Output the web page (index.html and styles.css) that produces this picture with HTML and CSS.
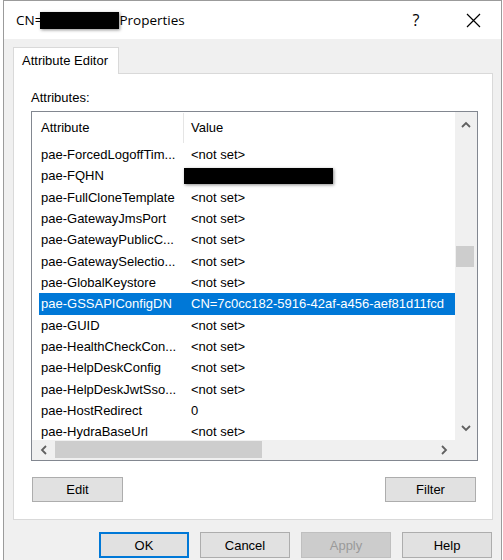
FILE: index.html
```html
<!DOCTYPE html>
<html lang="en">
  <head>
    <meta charset="UTF-8" />
    <title>Properties</title>
    <link rel="stylesheet" href="styles.css">
  </head>
  <body>
    <div class="window">
      <div class="titlebar">
        <div class="title">CN=<span class="redact title-redact"></span>Properties</div>
        <div class="tb-btn tb-help">?</div>
        <div class="tb-btn tb-close">
          <svg width="15" height="15" viewBox="0 0 15 15">
            <path d="M1 1 L14 14 M14 1 L1 14" stroke="#000" stroke-width="1.2" fill="none" />
          </svg>
        </div>
      </div>

      <div class="frame">
        <div class="tab">Attribute Editor</div>
        <div class="panel">
          <div class="label">Attributes:</div>
          <div class="listview">
            <div class="lv-content">
              <div class="lv-header">
                <div class="hd-cell hd-attr">Attribute</div>
                <div class="hd-cell hd-value">Value</div>
              </div>
              <div class="lv-body">
                <div class="row"><span class="c-attr">pae-ForcedLogoffTim...</span><span class="c-val">&lt;not set&gt;</span></div>
                <div class="row"><span class="c-attr">pae-FQHN</span><span class="c-val"><span class="redact val-redact"></span></span></div>
                <div class="row"><span class="c-attr">pae-FullCloneTemplate</span><span class="c-val">&lt;not set&gt;</span></div>
                <div class="row"><span class="c-attr">pae-GatewayJmsPort</span><span class="c-val">&lt;not set&gt;</span></div>
                <div class="row"><span class="c-attr">pae-GatewayPublicC...</span><span class="c-val">&lt;not set&gt;</span></div>
                <div class="row"><span class="c-attr">pae-GatewaySelectio...</span><span class="c-val">&lt;not set&gt;</span></div>
                <div class="row"><span class="c-attr">pae-GlobalKeystore</span><span class="c-val">&lt;not set&gt;</span></div>
                <div class="row selected"><span class="c-attr">pae-GSSAPIConfigDN</span><span class="c-val">CN=7c0cc182-5916-42af-a456-aef81d11fcd</span></div>
                <div class="row"><span class="c-attr">pae-GUID</span><span class="c-val">&lt;not set&gt;</span></div>
                <div class="row"><span class="c-attr">pae-HealthCheckCon...</span><span class="c-val">&lt;not set&gt;</span></div>
                <div class="row"><span class="c-attr">pae-HelpDeskConfig</span><span class="c-val">&lt;not set&gt;</span></div>
                <div class="row"><span class="c-attr">pae-HelpDeskJwtSso...</span><span class="c-val">&lt;not set&gt;</span></div>
                <div class="row"><span class="c-attr">pae-HostRedirect</span><span class="c-val">0</span></div>
                <div class="row"><span class="c-attr">pae-HydraBaseUrl</span><span class="c-val">&lt;not set&gt;</span></div>
              </div>
            </div>

            <div class="vscroll">
              <div class="sb-btn">
                <svg width="10" height="7" viewBox="0 0 10 7"><path d="M1 6 L5 2 L9 6" stroke="#606060" stroke-width="1.8" fill="none" /></svg>
              </div>
              <div class="sb-track"><div class="v-thumb"></div></div>
              <div class="sb-btn">
                <svg width="10" height="7" viewBox="0 0 10 7"><path d="M1 1 L5 5 L9 1" stroke="#606060" stroke-width="1.8" fill="none" /></svg>
              </div>
            </div>

            <div class="hscroll">
              <div class="sb-btn h">
                <svg width="7" height="10" viewBox="0 0 7 10"><path d="M6 1 L2 5 L6 9" stroke="#606060" stroke-width="1.8" fill="none" /></svg>
              </div>
              <div class="sb-track h"><div class="h-thumb"></div></div>
              <div class="sb-btn h">
                <svg width="7" height="10" viewBox="0 0 7 10"><path d="M1 1 L5 5 L1 9" stroke="#606060" stroke-width="1.8" fill="none" /></svg>
              </div>
            </div>

            <div class="corner"></div>
          </div>

          <div class="panel-buttons">
            <button class="btn btn-edit">Edit</button>
            <button class="btn btn-filter">Filter</button>
          </div>
        </div>

        <div class="footer">
          <button class="btn btn-default">OK</button>
          <button class="btn">Cancel</button>
          <button class="btn" disabled>Apply</button>
          <button class="btn">Help</button>
        </div>
      </div>
    </div>
  </body>
</html>
```

FILE: styles.css
```css
html,
body {
  margin: 0;
  padding: 0;
}

body {
  width: 503px;
  height: 560px;
  overflow: hidden;
  background: #fff;
  font-family: "Liberation Sans", Arial, sans-serif;
  font-size: 13px;
  color: #000;
}

.window {
  margin-left: 3px;
  width: 497px;
  height: 559px;
  border: 1px solid #9b9b9b;
  border-bottom: none;
  display: flex;
  flex-direction: column;
  overflow: hidden;
}

/* title bar */
.titlebar {
  height: 38px;
  flex-shrink: 0;
  display: flex;
  align-items: center;
  background: #fff;
}

.title {
  flex: 1;
  padding-left: 12px;
  font-family: "Open Sans", "Liberation Sans", sans-serif;
  font-size: 13.5px;
  display: flex;
  align-items: center;
  white-space: nowrap;
}

.redact {
  display: inline-block;
  background: #000;
  box-shadow: 1px 1px 3px rgba(0, 0, 0, 0.45);
}

.title-redact {
  width: 79px;
  height: 17px;
  margin-left: -2px;
}

.tb-btn {
  height: 38px;
  display: flex;
  align-items: center;
  justify-content: center;
}

.tb-help {
  width: 58px;
  font-family: "Open Sans", sans-serif;
  font-size: 16px;
}

.tb-close {
  width: 56px;
}

/* dialog body */
.frame {
  flex: 1;
  background: #f0f0f0;
  padding: 8px 8px 0 9px;
  overflow: hidden;
}

.tab {
  position: relative;
  z-index: 1;
  width: 96px;
  height: 26px;
  line-height: 26px;
  padding-left: 8px;
  background: #fff;
  border: 1px solid #d9d9d9;
  border-bottom: none;
  margin-bottom: -1px;
  white-space: nowrap;
}

.panel {
  background: #fff;
  border: 1px solid #d9d9d9;
  padding: 16px 14px 17px 17px;
}

.label {
  line-height: 16px;
  margin-bottom: 5px;
}

/* list view */
.listview {
  width: 445px;
  height: 348px;
  border: 1px solid #828790;
  display: grid;
  grid-template-columns: 423px 22px;
  grid-template-rows: 328px 20px;
}

.lv-content {
  overflow: hidden;
  display: flex;
  flex-direction: column;
}

.lv-header {
  height: 32px;
  display: flex;
  align-items: center;
  flex-shrink: 0;
}

.hd-cell {
  height: 30px;
  line-height: 30px;
  white-space: nowrap;
}

.hd-attr {
  width: 142px;
  padding-left: 9px;
  border-right: 1px solid #e5e5e5;
}

.hd-value {
  padding-left: 7px;
}

.lv-body {
  height: 296px;
  overflow: hidden;
}

.row {
  height: 21.33px;
  line-height: 21.33px;
  margin-left: 7px;
  width: 600px;
  display: flex;
  white-space: nowrap;
}

.row.selected {
  background: #0078d7;
  color: #fff;
}

.c-attr {
  width: 142px;
  padding-left: 2px;
  overflow: hidden;
}

.c-val {
  padding-left: 8px;
  display: flex;
  align-items: center;
}

.val-redact {
  width: 149px;
  height: 16px;
  margin-left: -7px;
}

/* scrollbars */
.vscroll {
  background: #f0f0f0;
  display: flex;
  flex-direction: column;
}

.sb-btn {
  height: 24px;
  display: flex;
  align-items: center;
  justify-content: center;
  flex-shrink: 0;
}

.sb-track {
  flex: 1;
}

.v-thumb {
  margin: 110px 3px 0 1px;
  height: 21px;
  background: #cdcdcd;
}

.hscroll {
  background: #f0f0f0;
  display: flex;
}

.sb-btn.h {
  height: auto;
  width: 22px;
}

.sb-track.h {
  padding: 1px 0 2px 1px;
}

.h-thumb {
  width: 207px;
  height: 17px;
  background: #cdcdcd;
}

.corner {
  background: #f0f0f0;
}

/* buttons */
.btn {
  width: 91px;
  height: 25px;
  padding: 0;
  background: #e1e1e1;
  border: 1px solid #adadad;
  font-family: "Liberation Sans", Arial, sans-serif;
  font-size: 13px;
  color: #000;
}

.btn:disabled {
  background: #cccccc;
  border-color: #bfbfbf;
  color: #9a9a9a;
}

.panel-buttons {
  margin-top: 16px;
  display: flex;
  justify-content: space-between;
}

.btn-edit {
  margin-left: 1px;
}

.btn-filter {
  margin-right: 2px;
}

.footer {
  padding: 12px 1px 0 0;
  display: flex;
  justify-content: flex-end;
  gap: 11px;
}

.footer .btn {
  width: 90px;
  height: 26px;
}

.btn-default {
  border-color: #0078d7;
  box-shadow: inset 0 0 0 1px #0078d7;
}
```
